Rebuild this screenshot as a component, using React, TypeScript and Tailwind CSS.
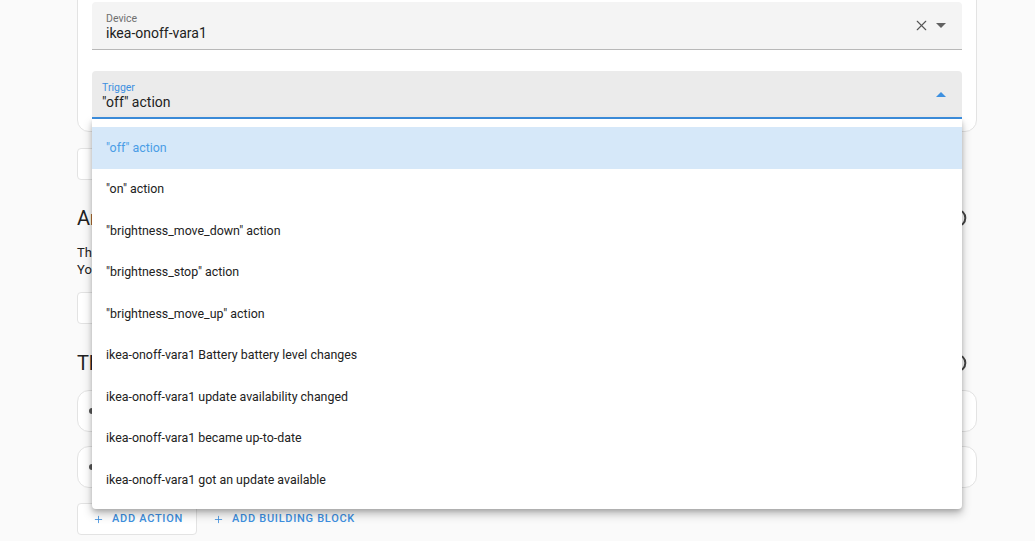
import { X, Plus, HelpCircle } from "lucide-react";

const options = [
  '"off" action',
  '"on" action',
  '"brightness_move_down" action',
  '"brightness_stop" action',
  '"brightness_move_up" action',
  "ikea-onoff-vara1 Battery battery level changes",
  "ikea-onoff-vara1 update availability changed",
  "ikea-onoff-vara1 became up-to-date",
  "ikea-onoff-vara1 got an update available",
];

function Caret({ up, className }: { up?: boolean; className: string }) {
  return (
    <svg viewBox="0 0 10 5" className={className} fill="currentColor">
      {up ? <path d="M0 5 L5 0 L10 5 Z" /> : <path d="M0 0 L5 5 L10 0 Z" />}
    </svg>
  );
}

function SectionHeading({ title }: { title: string }) {
  return (
    <div className="flex h-6 items-center justify-between pr-[10px]">
      <h2 className="text-[20px] leading-6 text-[#212121]">{title}</h2>
      <HelpCircle className="h-[20px] w-[20px] text-[#444]" strokeWidth={2.4} />
    </div>
  );
}

export default function App() {
  return (
    <div
      className="min-h-[541px] overflow-hidden bg-[#fafafa] pl-[77px] pr-[58px]"
      style={{ fontFamily: "Roboto, 'Liberation Sans', sans-serif" }}
    >
      {/* trigger card */}
      <div className="-mt-[15px] rounded-xl border border-[#e3e3e3] bg-white px-[14px] pb-[12px] pt-4">
        <div className="flex h-12 items-center rounded-t border-b border-[#b8b8b8] bg-[#f4f4f4] pl-[14px] pr-[16px]">
          <div className="flex-1 pt-[2px]">
            <div className="text-[10.5px] leading-3 text-[#6f6f6f]">Device</div>
            <div className="text-[14px] leading-4 text-[#212121]">ikea-onoff-vara1</div>
          </div>
          <X className="h-[17px] w-[17px] text-[#555]" strokeWidth={1.6} />
          <Caret className="ml-[6px] h-[5px] w-[10px] text-[#616161]" />
        </div>

        <div className="relative mt-[21px]">
          <div className="flex h-12 items-center rounded-t border-b-2 border-[#3d90e0] bg-[#ebebeb] pl-[10px] pr-[16px]">
            <div className="flex-1 pt-[3px]">
              <div className="text-[10.5px] leading-3 text-[#3d90e0]">Trigger</div>
              <div className="text-[14px] leading-4 text-[#212121]">"off" action</div>
            </div>
            <Caret up className="h-[5px] w-[10px] text-[#3d90e0]" />
          </div>

          {/* open dropdown */}
          <ul className="absolute left-0 right-0 top-[48px] z-10 overflow-hidden rounded-b bg-white py-2 shadow-[0_5px_10px_rgba(0,0,0,0.25),0_2px_4px_rgba(0,0,0,0.15)]">
            {options.map((o, i) => (
              <li
                key={o}
                className={
                  i === 0
                    ? "flex h-[41.5px] items-center bg-[#d6e8f9] px-[14px] pt-[1px] text-[12.4px] text-[#4a9de6]"
                    : "flex h-[41.5px] items-center px-[14px] pt-[1px] text-[12.4px] text-[#222]"
                }
              >
                {o}
              </li>
            ))}
          </ul>
        </div>
      </div>

      <button className="mt-4 flex h-8 items-center gap-2 rounded border border-[#e3e3e3] bg-white px-5 text-[12px] font-medium tracking-[0.1em] text-[#3d90e0]">
        <Plus className="h-4 w-4" /> ADD TRIGGER
      </button>

      <div className="mt-[26px]">
        <SectionHeading title="And if (optional)" />
      </div>
      <p className="mt-[14px] text-[13px] leading-[17px] text-[#212121]">
        These conditions are optional and prevent the automation from running unless all are met.
        <br />
        You can use these to check the state of entities before continuing.
      </p>
      <button className="mt-[14px] flex h-8 items-center gap-2 rounded border border-[#e3e3e3] bg-white px-5 text-[12px] font-medium tracking-[0.1em] text-[#3d90e0]">
        <Plus className="h-4 w-4" /> ADD CONDITION
      </button>

      <div className="mt-[27px]">
        <SectionHeading title="Then do" />
      </div>
      <div className="mt-[15px] flex flex-col gap-[14px]">
        {["Turn off light", "Delay"].map((t) => (
          <div key={t} className="flex h-[42px] items-center gap-3 rounded-xl border border-[#e3e3e3] bg-white pl-[11px]">
            <span className="h-[6px] w-[6px] rounded-full bg-[#555]" />
            <span className="text-[14px] text-[#212121]">{t}</span>
          </div>
        ))}
      </div>

      <div className="mt-[15px] flex items-center gap-4">
        <button className="flex h-8 items-center gap-[8px] rounded border border-[#e3e3e3] bg-white pl-[15px] pr-[13px] text-[11px] font-medium tracking-[0.065em] text-[#3d8fe0]">
          <Plus className="h-[11px] w-[11px]" strokeWidth={1.8} /> ADD ACTION
        </button>
        <button className="flex h-8 items-center gap-[8px] text-[11px] font-medium tracking-[0.065em] text-[#3d8fe0]">
          <Plus className="h-[11px] w-[11px]" strokeWidth={1.8} /> ADD BUILDING BLOCK
        </button>
      </div>
    </div>
  );
}
